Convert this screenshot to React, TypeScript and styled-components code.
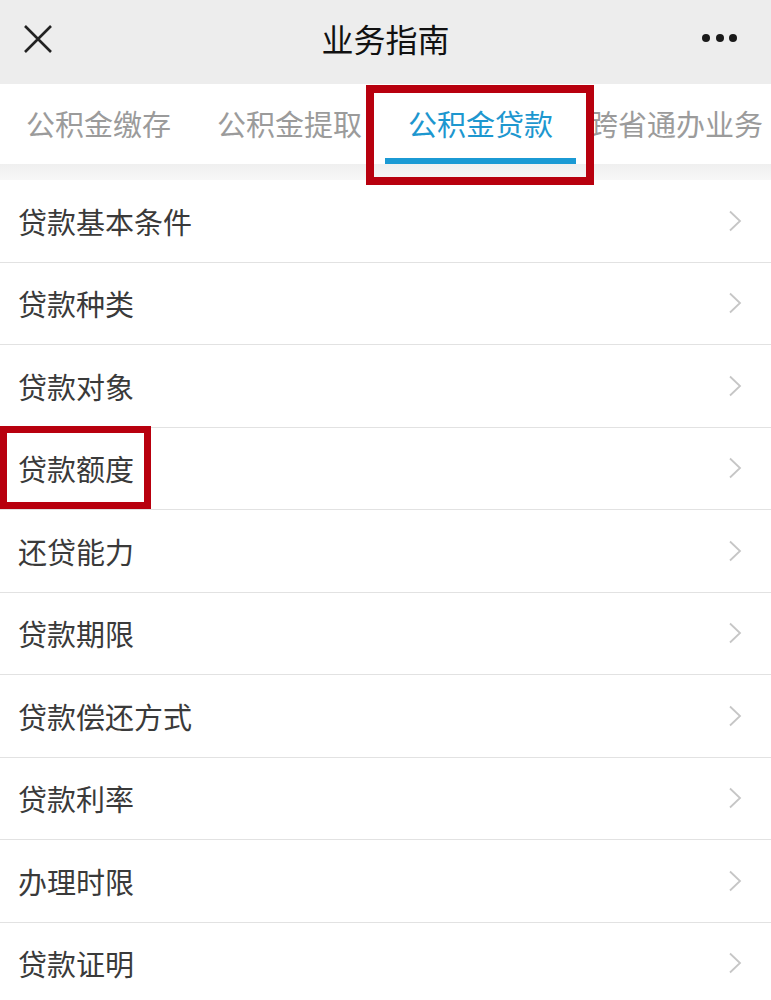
import styled, { createGlobalStyle } from 'styled-components';

const GlobalStyle = createGlobalStyle`
  body {
    margin: 0;
    background: #ffffff;
    font-family: "Noto Sans CJK SC", "Noto Sans", sans-serif;
  }
`;

const tabs = ['公积金缴存', '公积金提取', '公积金贷款', '跨省通办业务'];
const activeTab = 2;

const items = [
  '贷款基本条件',
  '贷款种类',
  '贷款对象',
  '贷款额度',
  '还贷能力',
  '贷款期限',
  '贷款偿还方式',
  '贷款利率',
  '办理时限',
  '贷款证明',
];
const markedItem = 3;

const App = () => {
  return (
    <Page>
      <GlobalStyle />
      <Header>
        <IconButton>
          <svg width="30" height="30" viewBox="0 0 30 30">
            <path d="M2 2 L28 28 M28 2 L2 28" stroke="#222" strokeWidth="2.6" fill="none" />
          </svg>
        </IconButton>
        <Title>业务指南</Title>
        <Dots>
          <Dot />
          <Dot />
          <Dot />
        </Dots>
      </Header>

      <TabBar>
        {tabs.map((t, i) => (
          <Tab key={t} $active={i === activeTab} $last={i === tabs.length - 1}>
            {t}
            {i === activeTab && <Underline />}
            {i === activeTab && <MarkBox $inset="-18px -18px -21px -19px" />}
          </Tab>
        ))}
      </TabBar>
      <Shade />

      <List>
        {items.map((label, i) => (
          <Row key={label}>
            <Label>
              {label}
              {i === markedItem && <MarkBox $inset="-22px -17px -21px -18px" $thin />}
            </Label>
            <svg width="14" height="22" viewBox="0 0 14 22">
              <path d="M2 1.5 L12 11 L2 20.5" stroke="#c6c6c6" strokeWidth="1.8" fill="none" />
            </svg>
          </Row>
        ))}
      </List>
    </Page>
  );
};

export default App;

const Page = styled.div`
  width: 771px;
  height: 1000px;
  overflow: hidden;
  background: #fff;
`;

const Header = styled.div`
  height: 84px;
  background: #ededed;
  display: flex;
  align-items: center;
  justify-content: space-between;
  padding: 0 34px 6px 23px;
  box-sizing: border-box;
  position: relative;
`;

const IconButton = styled.div`
  display: flex;
  width: 30px;
  height: 30px;
`;

const Title = styled.div`
  position: absolute;
  left: 0;
  right: 0;
  top: 16px;
  text-align: center;
  font-size: 32px;
  line-height: 44px;
  color: #111;
  font-weight: 400;
  pointer-events: none;
`;

const Dots = styled.div`
  display: flex;
  gap: 5.5px;
  padding-bottom: 2px;
`;

const Dot = styled.span`
  width: 8px;
  height: 8px;
  border-radius: 50%;
  background: #1a1a1a;
`;

const TabBar = styled.div`
  height: 80px;
  display: flex;
  align-items: flex-start;
  padding-left: 3px;
  white-space: nowrap;
`;

const Tab = styled.div<{ $active?: boolean; $last?: boolean }>`
  position: relative;
  flex: none;
  padding: 0 ${(p) => (p.$last ? '0' : '23px')} 0 ${(p) => (p.$last ? '13px' : '23px')};
  font-size: 29px;
  line-height: 40px;
  margin-top: 19px;
  height: 61px;
  color: ${(p) => (p.$active ? '#1d97cf' : '#9b9b9b')};
`;

const Underline = styled.div`
  position: absolute;
  left: 0;
  right: 0;
  bottom: 0;
  height: 6px;
  background: #1b9ad4;
`;

const MarkBox = styled.div<{ $inset: string; $thin?: boolean }>`
  position: absolute;
  inset: ${(p) => p.$inset};
  border: ${(p) => (p.$thin ? '7px' : '8px')} solid #b8000e;
  pointer-events: none;
  z-index: 2;
`;

const Shade = styled.div`
  height: 16px;
  background: linear-gradient(#efefef, #f7f7f7);
`;

const List = styled.div`
  display: flex;
  flex-direction: column;
`;

const Row = styled.div`
  height: 82.5px;
  box-sizing: border-box;
  display: flex;
  align-items: center;
  justify-content: space-between;
  padding: 0 29px 0 18px;
  border-bottom: 1.5px solid #e2e2e2;
`;

const Label = styled.div`
  position: relative;
  font-size: 29px;
  line-height: 40px;
  color: #3a3a3a;
`;
